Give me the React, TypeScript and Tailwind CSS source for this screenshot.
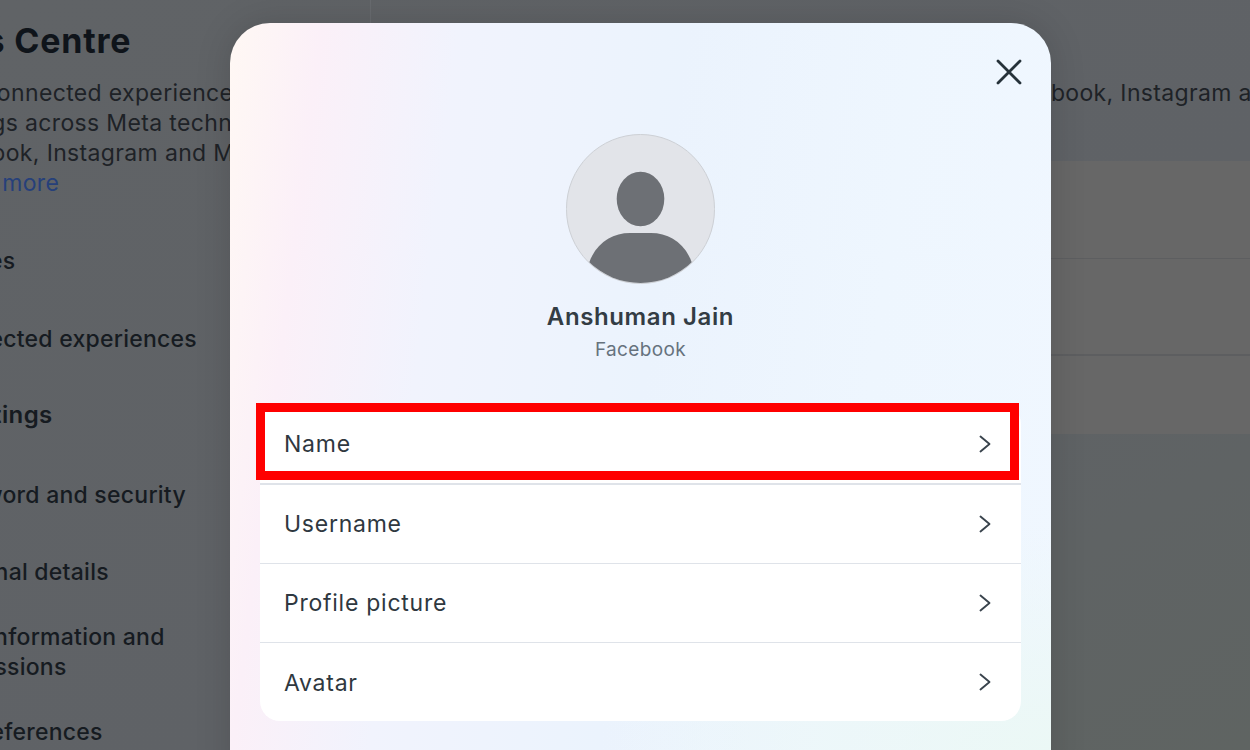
import React from "react";

function Chevron() {
  return (
    <svg width="16" height="20" viewBox="0 0 16 20" fill="none" className="shrink-0">
      <path d="M3.5 2.5 L12.5 10 L3.5 17.5" stroke="#3a444d" strokeWidth="1.9" strokeLinecap="round" strokeLinejoin="round" />
    </svg>
  );
}

function Row({ label, h, border, nudge }: { label: string; h: string; border: string; nudge?: string }) {
  return (
    <div className={`flex items-center justify-between pl-[24px] pr-[28px] ${h} ${border}`}>
      <span className={`text-[23px] leading-[28px] text-[#2f3840] tracking-[0.75px] ${nudge ?? ""}`}>{label}</span>
      <Chevron />
    </div>
  );
}

function Side({ text, cls }: { text: React.ReactNode; cls: string }) {
  return <div className={`pl-[80px] font-medium text-[23px] leading-[30px] tracking-[0.25px] text-[#161b21] ${cls}`}>{text}</div>;
}

export default function App() {
  return (
    <div className="relative w-[1250px] h-[750px] overflow-hidden bg-[linear-gradient(150deg,#606366_0%,#5f6266_60%,#5f6462_100%)] font-['Inter','Liberation_Sans',sans-serif]">
      {/* Page behind the dialog */}
      <div className="flex h-full">
        <aside className="w-[551px] shrink-0 h-full border-r border-[#686b6f] -ml-[180px] pl-[30px] pt-[22px] whitespace-nowrap">
          <h1 className="-ml-[10px] text-[34px] leading-[38px] font-bold tracking-[0.8px] text-[#0f141a]">Accounts Centre</h1>
          <div className="-ml-[20px] mt-[18px] text-[23px] leading-[30px] tracking-[0.35px] text-[#1e2227]">
            <p>Manage your connected experiences and</p>
            <p className="ml-[3px]">account settings across Meta technologies</p>
            <p>such as Facebook, Instagram and Meta</p>
            <p>Horizon. <span className="text-[#26407a]">Learn more</span></p>
          </div>
          <Side text="Profiles" cls="mt-[48px]" />
          <Side text="Connected experiences" cls="mt-[48px]" />
          <h2 className="mt-[45px] text-[24px] leading-[32px] font-semibold tracking-[0.4px] text-[#161b21]">Account settings</h2>
          <Side text="Password and security" cls="mt-[49px]" />
          <Side text="Personal details" cls="mt-[47px]" />
          <Side text={<>Your information and<br />permissions</>} cls="mt-[35px]" />
          <Side text="Ad preferences" cls="mt-[35px]" />
        </aside>
        <main className="flex-1 min-w-0 pt-[77px] whitespace-nowrap overflow-hidden">
          <p className="pl-[626px] pt-[1px] -mb-[1px] text-[23px] leading-[30px] tracking-[0.35px] text-[#1e2227]">Facebook, Instagram and Meta</p>
          <div className="mt-[54px] bg-[#676767]">
            <div className="h-[98px] border-b border-[#5d5e60]" />
            <div className="h-[97px] border-b-2 border-[#5d5e60]" />
            <div className="h-[78px]" />
          </div>
        </main>
      </div>

      {/* Dialog */}
      <div className="absolute left-[230px] top-[23px] w-[821px] h-[760px] rounded-t-[40px] shadow-[0_0_36px_rgba(0,0,0,0.14)] bg-[radial-gradient(ellipse_55%_30%_at_100%_96%,#ebf8f5_0%,rgba(235,248,245,0)_100%),linear-gradient(97deg,#fff8f4_0%,#fbf0f8_10%,#f1f3fd_25%,#ebf3fd_50%,#eef6fe_75%,#f0f7ff_100%)]">
        <button className="absolute left-[765px] top-[35px]" aria-label="Close">
          <svg width="28" height="28" viewBox="0 0 28 28" fill="none">
            <path d="M3 3 L25 25 M25 3 L3 25" stroke="#26323a" strokeWidth="2.8" strokeLinecap="round" />
          </svg>
        </button>
        <div className="flex flex-col items-center pt-[111px]">
          <div className="w-[149px] h-[150px] rounded-full bg-[#e2e4e9] border border-[#cdd0d5] overflow-hidden">
            <svg width="147" height="148" viewBox="0 0 147 148">
              <ellipse cx="73.5" cy="64" rx="23.8" ry="27.2" fill="#6d7075" />
              <path d="M22 128 C29 108 45 98 63 98 L84 98 C102 98 118 108 125 128 C112 142 94 150 73.5 150 C53 150 35 142 22 128 Z" fill="#6d7075" />
            </svg>
          </div>
          <div className="mt-[17px] text-[24px] leading-[32px] font-semibold text-[#333c44] tracking-[0.6px]">Anshuman Jain</div>
          <div className="mt-[4px] text-[19px] leading-[26px] text-[#66727d] tracking-[0.35px]">Facebook</div>
        </div>
        <div className="mx-[30px] mt-[41px] rounded-[20px] bg-white overflow-hidden">
          <Row label="Name" h="h-[81px]" border="border-b-2 border-[#dfe3e9]" nudge="pt-[1px]" />
          <Row label="Username" h="h-[79px]" border="border-b border-[#dfe3e9]" />
          <Row label="Profile picture" h="h-[79px]" border="border-b border-[#dfe3e9]" />
          <Row label="Avatar" h="h-[78px]" border="" nudge="pt-[2px]" />
        </div>
        {/* Red annotation */}
        <div className="absolute left-[26px] top-[380px] w-[763px] h-[77px] border-[9px] border-[#ff0000]" />
      </div>
    </div>
  );
}
